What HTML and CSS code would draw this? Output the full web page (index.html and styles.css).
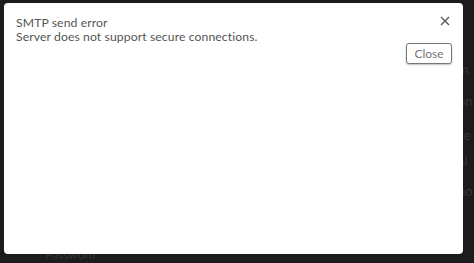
FILE: index.html
```html
<!DOCTYPE html>
<html>
<head>
<meta charset="utf-8">
<link rel="stylesheet" href="styles.css">
</head>
<body>
<div class="page">
  <div class="bg-col">
    <div class="bg-row r1">m</div>
    <div class="bg-row r2">on</div>
    <div class="bg-row r3">se</div>
    <div class="bg-row r4">al</div>
    <div class="bg-row r5">ho</div>
  </div>
  <div class="bg-foot">Password</div>
</div>
<div class="dialog">
  <div class="dialog-head">
    <div class="msg">
      <div class="title">SMTP send error</div>
      <div class="body">Server does not support secure connections.</div>
    </div>
    <button class="x" aria-label="close">
      <svg width="10" height="10" viewBox="0 0 10 10"><path d="M1 1L9 9M9 1L1 9" stroke="#555" stroke-width="1.3" fill="none"/></svg>
    </button>
  </div>
  <div class="actions">
    <button class="close-btn">Close</button>
  </div>
</div>
</body>
</html>
```
FILE: styles.css
```css
html, body {
  margin: 0;
  padding: 0;
  width: 474px;
  height: 263px;
  overflow: hidden;
  background: #1c1c1c;
  font-family: "Lato", "Open Sans", sans-serif;
}
.page {
  position: relative;
  width: 474px;
  height: 263px;
}
.bg-col {
  position: absolute;
  left: 458px;
  top: 0;
  width: 16px;
  height: 263px;
}
.bg-row {
  position: absolute;
  left: 0;
  color: #363636;
  font-size: 13px;
}
.r1 { top: 61px; }
.r2 { top: 93px; }
.r3 { top: 127px; }
.r4 { top: 153px; }
.r5 { top: 183px; }
.bg-foot {
  position: absolute;
  left: 45px;
  top: 247px;
  color: #333;
  font-size: 12px;
}
.dialog {
  position: absolute;
  left: 4px;
  top: 3px;
  width: 459px;
  height: 251px;
  background: #fff;
  border-radius: 4px;
  box-sizing: border-box;
  padding: 13px 11px 0 12px;
}
.dialog-head {
  display: flex;
  justify-content: space-between;
  align-items: flex-start;
}
.msg {
  color: #555;
  font-size: 12.2px;
  line-height: 14px;
  letter-spacing: 0.1px;
}
.x {
  background: none;
  border: 0;
  padding: 0;
  margin: -1px 1px 0 0;
  width: 12px;
  height: 12px;
  display: flex;
  align-items: center;
  justify-content: center;
}
.actions {
  display: flex;
  justify-content: flex-end;
  margin-top: -1px;
}
.close-btn {
  font-family: inherit;
  font-size: 12px;
  color: #777;
  background: #fff;
  border: 1px solid #777;
  border-radius: 3px;
  width: 46px;
  height: 21px;
  padding: 0;
  box-shadow: 0 1px 2px rgba(0,0,0,0.25);
}
```
